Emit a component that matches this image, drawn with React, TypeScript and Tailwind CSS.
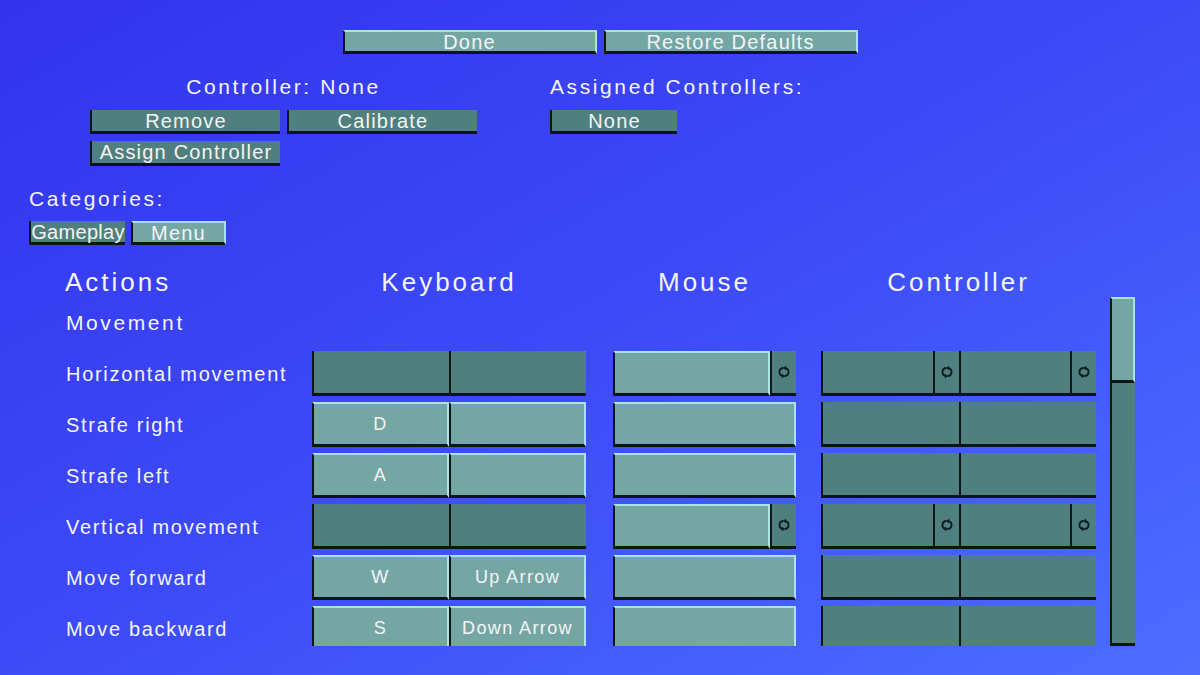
import React from 'react';

type Kind = 'light' | 'dark';

const LIGHT =
  'bg-[#74a6a4] border-t-2 border-r-2 border-l-2 border-b-[3px] border-t-[#a9e3e6] border-r-[#a9e3e6] border-l-[#0d1616] border-b-[#0d1616]';
const DARK = 'bg-[#4f807f] border-l-2 border-b-[3px] border-l-[#0d1616] border-b-[#0d1616]';

const font = { fontFamily: '"Liberation Sans", Arial, sans-serif' };

function Button({ kind, className, children }: { kind: Kind; className: string; children?: React.ReactNode }) {
  return (
    <div
      className={`${kind === 'light' ? LIGHT : DARK} ${className} flex items-center justify-center text-[20px] leading-none tracking-[1.2px] text-[#f4f4f4] whitespace-nowrap`}
    >
      {children}
    </div>
  );
}

// two half-circle arrows, like the reset glyph in the game's UI
function ResetIcon() {
  return (
    <svg width="12" height="14" viewBox="0 0 12 13" fill="none">
      <path d="M5.4 2.5 A4 4 0 0 0 4.6 10.4" stroke="#0f1c1c" strokeWidth="1.9" />
      <path d="M3.8 8.3 L7.2 10.5 L3.8 12.7 Z" fill="#0f1c1c" />
      <path d="M6.6 10.5 A4 4 0 0 0 7.4 2.6" stroke="#0f1c1c" strokeWidth="1.9" />
      <path d="M8.2 0.3 L4.8 2.5 L8.2 4.7 Z" fill="#0f1c1c" />
    </svg>
  );
}

function Reset() {
  return (
    <div className={`${DARK} w-[26px] flex items-center justify-center`}>
      <ResetIcon />
    </div>
  );
}

interface Field {
  kind: Kind;
  text?: string;
  reset?: boolean;
}

function Slot({ field }: { field: Field }) {
  return (
    <div className="flex flex-1 h-full">
      <div
        className={`${field.kind === 'light' ? LIGHT : DARK} flex-1 flex items-center justify-center text-[18px] tracking-[1.4px] text-[#f4f4f4]`}
      >
        {field.text}
      </div>
      {field.reset && <Reset />}
    </div>
  );
}

interface Row {
  label: string;
  keyboard: [Field, Field];
  mouse: Field;
  controller: [Field, Field];
}

const rows: Row[] = [
  {
    label: 'Horizontal movement',
    keyboard: [{ kind: 'dark' }, { kind: 'dark' }],
    mouse: { kind: 'light', reset: true },
    controller: [{ kind: 'dark', reset: true }, { kind: 'dark', reset: true }],
  },
  {
    label: 'Strafe right',
    keyboard: [{ kind: 'light', text: 'D' }, { kind: 'light' }],
    mouse: { kind: 'light' },
    controller: [{ kind: 'dark' }, { kind: 'dark' }],
  },
  {
    label: 'Strafe left',
    keyboard: [{ kind: 'light', text: 'A' }, { kind: 'light' }],
    mouse: { kind: 'light' },
    controller: [{ kind: 'dark' }, { kind: 'dark' }],
  },
  {
    label: 'Vertical movement',
    keyboard: [{ kind: 'dark' }, { kind: 'dark' }],
    mouse: { kind: 'light', reset: true },
    controller: [{ kind: 'dark', reset: true }, { kind: 'dark', reset: true }],
  },
  {
    label: 'Move forward',
    keyboard: [{ kind: 'light', text: 'W' }, { kind: 'light', text: 'Up Arrow' }],
    mouse: { kind: 'light' },
    controller: [{ kind: 'dark' }, { kind: 'dark' }],
  },
  {
    label: 'Move backward',
    keyboard: [{ kind: 'light', text: 'S' }, { kind: 'light', text: 'Down Arrow' }],
    mouse: { kind: 'light' },
    controller: [{ kind: 'dark' }, { kind: 'dark' }],
  },
];

export default function App() {
  return (
    <div
      style={font}
      className="w-[1200px] h-[675px] overflow-hidden bg-gradient-to-br from-[#3333ec] via-[#3d4af8] to-[#4b6eff] text-[#f4f4f4]"
    >
      {/* top buttons */}
      <div className="pt-[30px] flex justify-center gap-[7px]">
        <Button kind="light" className="w-[254px] h-[24px]">Done</Button>
        <Button kind="light" className="w-[254px] h-[24px]">Restore Defaults</Button>
      </div>

      {/* controller assignment */}
      <div className="mt-[21px] flex pl-[90px]">
        <div className="w-[387px] flex flex-col">
          <div className="h-[24px] leading-[24px] text-center text-[21px] tracking-[2.6px]">Controller: None</div>
          <div className="mt-[11px] flex gap-[7px]">
            <Button kind="dark" className="w-[190px] h-[24px]">Remove</Button>
            <Button kind="dark" className="w-[190px] h-[24px]">Calibrate</Button>
          </div>
          <div className="mt-[7px] flex">
            <Button kind="dark" className="w-[190px] h-[25px]">Assign Controller</Button>
          </div>
        </div>
        <div className="ml-[73px] flex flex-col">
          <div className="h-[24px] leading-[24px] text-[21px] tracking-[2.6px]">Assigned Controllers:</div>
          <div className="mt-[11px] flex">
            <Button kind="dark" className="w-[127px] h-[24px]">None</Button>
          </div>
        </div>
      </div>

      {/* categories */}
      <div className="mt-[21px] pl-[29px]">
        <div className="h-[24px] leading-[24px] text-[21px] tracking-[2.6px]">Categories:</div>
        <div className="mt-[10px] flex gap-[6px]">
          <Button kind="dark" className="w-[96px] h-[24px] !tracking-[0.3px] overflow-visible">Gameplay</Button>
          <Button kind="light" className="w-[95px] h-[24px]">Menu</Button>
        </div>
      </div>

      {/* headers */}
      <div className="mt-[24px] pl-[65px] flex h-[26px] items-center text-[26px] tracking-[3px]">
        <div className="w-[247px]">Actions</div>
        <div className="w-[274px] text-center">Keyboard</div>
        <div className="ml-[27px] w-[183px] text-center">Mouse</div>
        <div className="ml-[25px] w-[275px] text-center">Controller</div>
      </div>

      {/* bindings list */}
      <div className="mt-[2px] pl-[65px] flex">
        <div className="w-[1031px] h-[349px] overflow-hidden">
          <div className="h-[54px] pt-[14px] pl-[1px] text-[21px] leading-[24px] tracking-[2.6px]">Movement</div>
          <div className="flex flex-col gap-[6px]">
            {rows.map((row) => (
              <div key={row.label} className="flex h-[45px] shrink-0">
                <div className="w-[247px] pl-[1px] flex items-center text-[20px] tracking-[1.7px]">{row.label}</div>
                <div className="w-[274px] flex">
                  <Slot field={row.keyboard[0]} />
                  <Slot field={row.keyboard[1]} />
                </div>
                <div className="ml-[27px] w-[183px] flex">
                  <Slot field={row.mouse} />
                </div>
                <div className="ml-[25px] w-[275px] flex">
                  <Slot field={row.controller[0]} />
                  <Slot field={row.controller[1]} />
                </div>
              </div>
            ))}
          </div>
        </div>
        {/* scrollbar */}
        <div className="ml-[14px] w-[25px] h-[349px] flex flex-col">
          <div className={`${LIGHT} h-[86px]`} />
          <div className={`${DARK} flex-1`} />
        </div>
      </div>
    </div>
  );
}
